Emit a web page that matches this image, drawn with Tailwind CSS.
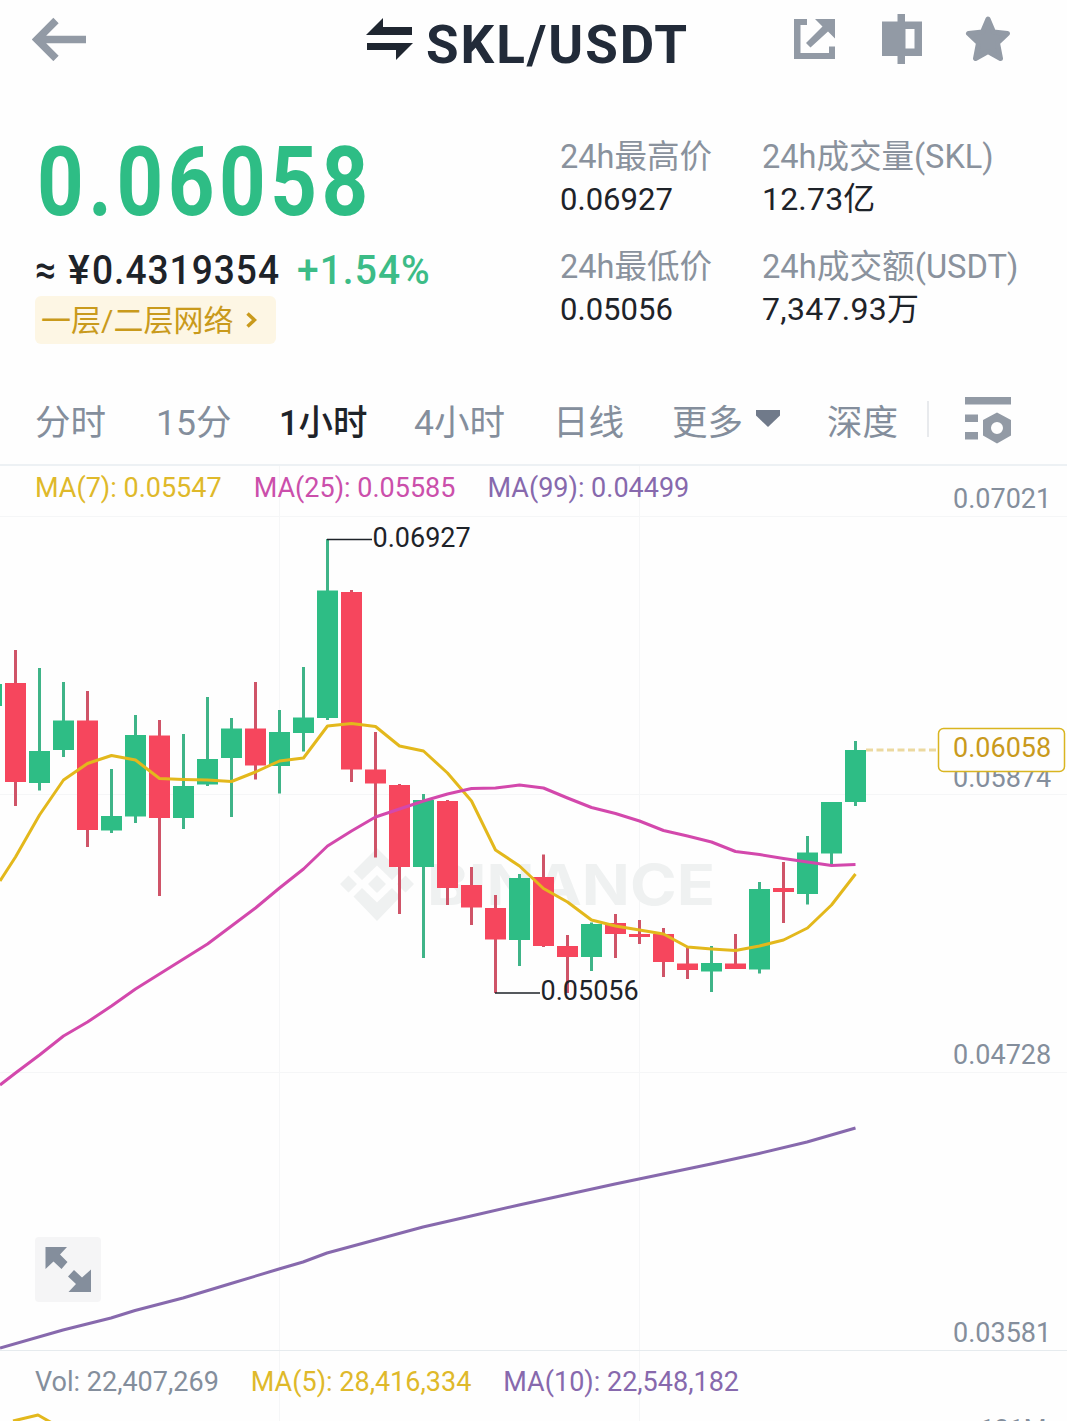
<!DOCTYPE html>
<html lang="zh-CN">
<head>
<meta charset="utf-8">
<title>SKL/USDT</title>
<script src="https://cdn.jsdelivr.net/npm/@tailwindcss/browser@4"></script>
</head>
<body class="bg-[#fefefe] font-[Roboto,'Noto_Sans_CJK_SC',sans-serif] text-[#1e2329]">
<main class="flex h-[1421px] w-[1067px] flex-col overflow-hidden">

  <header class="flex h-[88px] shrink-0 items-start">
    <svg class="mt-[17px] ml-8 h-11 w-[55px] shrink-0" viewBox="0 0 55 44" fill="none" stroke="#929aa5" stroke-width="7.5"><path d="M54 22.5H7M24 3.500L5 22.500L24 41.500"/></svg>
    <div class="ml-[279px] flex w-[321px] shrink-0 items-start">
      <svg class="mt-[18px] h-[42px] w-[47px] shrink-0" viewBox="0 0 47 42" fill="#1f2630"><path d="M0 17L17 0V9H46V17ZM1 25H47L30 42V32H1Z"/></svg>
      <h1 class="ml-[13px] mt-[18px] origin-left scale-x-[.98] text-[54px]/[54px] font-bold tracking-[2px] whitespace-nowrap text-[#222b39]">SKL/USDT</h1>
    </div>
    <div class="ml-[107px] flex items-start">
      <svg class="mt-[18px] h-[42px] w-[42px]" viewBox="0 0 42 42" fill="#929aa5"><path d="M0 1H13V7H6.500V35H35V28.500H41V41H0Z"/><path d="M21 1H41V20.500L34 13.500L16.500 29.500L12 25L28.500 8.500Z"/></svg>
      <svg class="mt-[14px] ml-[45px] h-[50px] w-[42px]" viewBox="0 0 42 50" fill="#929aa5"><path fill-rule="evenodd" d="M16.500 0H24V7.500H41V42H24V50H16.500V42H1V7.500H16.500ZM24.500 15V34.500H33.500V15Z"/></svg>
      <svg class="mt-[15px] ml-[42px] h-[48px] w-[46px]" viewBox="0 0 46 48" fill="#929aa5" stroke="#929aa5" stroke-width="5" stroke-linejoin="round"><path d="M23 4L28.500 17L42.500 18.500L32.500 28L35.500 43.500L23 36.500L10.500 43.500L13.500 28L3.500 18.500L17.500 17Z"/></svg>
    </div>
  </header>

  <section class="flex h-[297px] shrink-0">
    <div class="w-[560px] shrink-0 pl-[35px]">
      <div class="mt-[45px] ml-[2px] h-[98px] origin-left scale-x-[.84] text-[97px]/[98px] font-bold tracking-[5.400px] whitespace-nowrap text-[#2ebd85]">0.06058</div>
      <div class="mt-[15px] flex h-12 items-center text-[41px]/[48px] font-medium whitespace-nowrap">
        <span class="w-[33px] shrink-0"><span class="inline-block origin-left scale-x-[.9]">≈</span></span>
        <span class="w-[24px] shrink-0">¥</span>
        <span class="w-[205px] shrink-0"><span class="inline-block origin-left scale-x-[.905] tracking-[1.100px]">0.4319354</span></span>
        <span class="inline-block origin-left scale-x-[.95] tracking-[1.100px] text-[#3cbc87]">+1.54%</span>
      </div>
      <div class="mt-[2px] flex h-12 w-[241px] items-center rounded-md bg-[#fdf6e4] pl-[6px] text-[30px]/[48px] text-[#c99a1c]">
        <span class="pt-[2px]">一层/二层网络</span>
        <svg class="ml-[13px] h-4 w-[11px]" viewBox="0 0 11 16" fill="none" stroke="#c99a1c" stroke-width="3.500"><path d="M1.500 1.500L8.500 8L1.500 14.500"/></svg>
      </div>
    </div>
    <div class="grid auto-rows-[110px] grid-cols-[202px_300px] pt-[47px] text-[32px]/[43px] whitespace-nowrap">
      <div><div class="origin-left scale-x-[.985] text-[33px]/[43px] text-[#8a929d]"><span>24h最高价</span></div><div class="origin-left scale-x-[.97]">0.06927</div></div>
      <div><div class="origin-left scale-x-[.985] text-[33px]/[43px] text-[#8a929d]">24h成交量(SKL)</div><div class="tracking-[.2px]">12.73亿</div></div>
      <div><div class="origin-left scale-x-[.985] text-[33px]/[43px] text-[#8a929d]">24h最低价</div><div class="origin-left scale-x-[.97]">0.05056</div></div>
      <div><div class="origin-left scale-x-[.99] text-[33px]/[43px] text-[#8a929d]">24h成交额(USDT)</div><div class="tracking-[.3px]">7,347.93万</div></div>
    </div>
  </section>

  <nav class="flex h-[79px] shrink-0 items-center pb-[3px] pl-[35px] text-[35.500px]/[44px] whitespace-nowrap text-[#848e9c]">
    <span class="w-[121px]">分时</span>
    <span class="w-[123px]">15分</span>
    <span class="w-[135px] origin-left scale-x-[.97] font-medium text-[#1e2329]">1小时</span>
    <span class="w-[139px]">4小时</span>
    <span class="w-[119px]">日线</span>
    <span class="w-[84px]">更多</span>
    <svg class="mb-[10px] h-[17px] w-6" viewBox="0 0 24 17" fill="#707a8a"><path d="M0 0H24V5.500L12 17L0 5.500Z"/></svg>
    <span class="ml-[47px] w-[100px]">深度</span>
    <span class="mb-2 h-9 w-[2px] bg-[#e8eaed]"></span>
    <svg class="mb-[6px] ml-[35px] h-[48px] w-[47px]" viewBox="0 0 47 48" fill="#929aa5"><path d="M1 1H47V8.500H1ZM1 18.500H14V26H1ZM1 36H14V43.500H1Z"/><path fill-rule="evenodd" d="M33 16.500L47 24V39.500L33 47.500L19 39.500V24ZM33 26A6 6 0 1 0 33 38A6 6 0 1 0 33 26Z"/></svg>
  </nav>

  <section class="grid h-[957px] w-[1067px] shrink-0 text-[27px]/[32px]">
    <svg class="[grid-area:1/1] h-[957px] w-[1067px]" viewBox="0 464 1067 957" font-family="Roboto, sans-serif" font-size="27">
      <path d="M0 465H1067" stroke="#edf1f4" stroke-width="2"/>
      <path d="M0 516.500H1067M0 794.500H1067M0 1072.500H1067M279.500 466V1421M639.500 466V1421" stroke="#f5f6f7"/>
      <path d="M0 1350.500H1067" stroke="#e6ebee"/>
      <g fill="#eff1f1">
        <path d="M377 848L400.500 871.500L392 880L377 865.500L362 880L353.500 871.500ZM377 875L386 884L377 893L368 884ZM348.500 875.500L357 884L348.500 892.500L340 884ZM405.500 875.500L414 884L405.500 892.500L397 884ZM362 888L377 902.500L392 888L400.500 896.500L377 921L353.500 896.500Z"/>
        <text x="427" y="905" font-family="Inter, sans-serif" font-weight="700" font-size="56" textLength="288" lengthAdjust="spacingAndGlyphs">BINANCE</text>
      </g>
      <g id="candles"></g>
      <g fill="none" stroke-width="3" stroke-linejoin="round">
        <polyline stroke="#8769ad" points="0,1348 63,1330 111,1318 135,1310.500 183,1298 231,1283.500 279,1269 303,1262 327,1253 375,1240 423,1227 471,1216 519,1205 567,1194.500 615,1184 663,1174 711,1164 759,1153.500 807,1142 855.500,1128"/>
        <polyline stroke="#e3b81c" points="0,881 15.500,857 39.500,815 63.500,780 87.500,763.500 111.500,755.500 135.500,760 159.500,778.500 183.500,779.500 207.500,780 231.500,781.500 255.500,772 279.500,761 303.500,758 327.500,726 351.500,723.500 375.500,726.500 399.500,746 423.500,751 447.500,773 471.500,801 495.500,850 519.500,866 543.500,888.500 567.500,902 591.500,920 615.500,926 639.500,930 663.500,934 687.500,947 711.500,949 735.500,950.500 759.500,946 783.500,940 807.500,928 831.500,905 855.500,874"/>
        <polyline stroke="#d348ac" points="0,1085 15.500,1073 39.500,1055 63.500,1036 87.500,1022 111.500,1006 135.500,989 159.500,974 183.500,959 207.500,944 231.500,926 255.500,908 279.500,888 303.500,869 327.500,846 351.500,831 375.500,817 399.500,809 423.500,801 447.500,794 471.500,788.500 495.500,788 519.500,785 543.500,788 567.500,798 591.500,807.500 615.500,813.500 639.500,821 663.500,830.500 687.500,836 711.500,842 735.500,851.500 759.500,854.500 783.500,858.500 807.500,862 831.500,865.500 855.500,864.500"/>
        <path d="M13 1421L38 1415L52 1423" stroke="#e3b81c"/>
      </g>
      <path d="M327 539.500H372M495 993H540" stroke="#1e2329" stroke-width="1.500"/>
      <g fill="#1e2329"><text x="372.500" y="547">0.06927</text><text x="540.500" y="1000">0.05056</text></g>
      <g fill="#848e9c">
        <text x="953" y="508">0.07021</text><text x="953" y="786.500">0.05874</text><text x="953" y="1064">0.04728</text><text x="953" y="1342">0.03581</text><text x="980" y="1438" font-size="26">131M</text>
      </g>
      <path d="M866 750H938" stroke="#ecd9a0" stroke-width="3" stroke-dasharray="7 3.500"/>
      <rect x="938.500" y="728.500" width="126" height="43" rx="5" fill="#fefefe" stroke="#d9b520" stroke-width="1.500"/>
      <text x="953" y="757" fill="#c99a1c">0.06058</text>
      <rect x="35" y="1237" width="66" height="65" rx="4" fill="#f5f5f6"/>
      <path fill="#848e9c" d="M45.500 1247H67L60 1254.500L67.500 1262L61.500 1269L53.500 1261.500L45.500 1269ZM91 1292H68.500L76 1284L68 1276.500L74 1270L82 1277.500L91 1269.500Z"/>
    </svg>
    <div class="[grid-area:1/1] flex flex-col justify-between pt-2 pb-[23px] pl-[35px] whitespace-nowrap">
      <div class="flex gap-8"><span class="text-[#dfb92a]">MA(7): 0.05547</span><span class="text-[#cb4fab]">MA(25): 0.05585</span><span class="text-[#8769ad]">MA(99): 0.04499</span></div>
      <div class="flex gap-8"><span class="text-[#848e9c]">Vol: 22,407,269</span><span class="text-[#dfb92a]">MA(5): 28,416,334</span><span class="text-[#8769ad]">MA(10): 22,548,182</span></div>
    </div>
  </section>
</main>
<script>
  // [direction, body top, body bottom, high, low], one candle every 24px
  const candles = [
    [1,684,706,684,706],[0,683,782,650,806],[1,751,783,668,790.5],[1,720.5,750,682,757],[0,720.5,830,691,847],
    [1,816,830.500,769,833],[1,735,816.500,715,823],[0,735.500,818,720,896],[1,786,818,734,829],[1,759,784.500,697,786],
    [1,728.500,758,718,817],[0,728.500,765.500,682,779.500],[1,732,766,710,793.500],[1,717.500,733,667,751.500],[1,590.500,718,539,720],
    [0,592,769.500,590,782],[0,769.500,783.500,732,857.500],[0,785,867,784,914],[1,800,867,794,958],[0,801,888,800,905],
    [0,885,907.500,867,925],[0,908,939.500,895,993],[1,878,940,874,966],[0,877,946,854.500,947],[0,946,957,935,993],
    [1,924,957,922.500,971],[0,923,934,914,958],[0,934,937,920,944],[0,934,962,928,977],[0,963.500,970,948,979],
    [1,963,971.500,946,992],[0,963.500,969,934,969],[1,889,969.500,882,973.500],[0,888,892,862,923],[1,852.500,894,836,904.500],
    [1,802,853.500,802,865],[1,750,802,741,806]
  ];
  document.getElementById('candles').innerHTML = candles.map(([up, top, bottom, high, low], i) => {
    const x = 24 * i - 8.5;
    return `<rect x="${x - 1.5}" y="${high}" width="3" height="${low - high}" fill="${up ? '#3fb488' : '#cf5468'}"/>` +
      `<rect x="${x - 10.5}" y="${top}" width="21" height="${bottom - top}" fill="${up ? '#2ebd85' : '#f6465d'}"/>`;
  }).join('');
</script>
</body>
</html>
